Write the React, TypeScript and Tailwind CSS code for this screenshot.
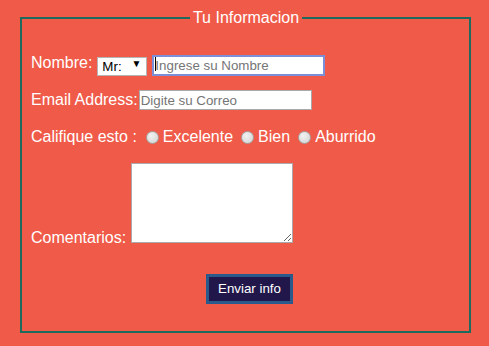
import { useState } from 'react';

const radios = ['Excelente', 'Bien', 'Aburrido'];

export default function App() {
  const [rating, setRating] = useState('');

  return (
    <div
      className="min-h-screen w-full bg-[#f05a48] pt-[9px] text-white"
      style={{ fontFamily: '"Liberation Sans", Arial, sans-serif' }}
    >
      <form onSubmit={(e) => e.preventDefault()}>
        <fieldset className="mx-[20px] h-[324px] w-[451px] border-2 border-[#1e6a5c] pl-[9px] pr-[8px]">
          <legend className="mx-auto px-[3px] text-[16px] leading-[18px]">Tu Informacion</legend>

          {/* Nombre */}
          <div className="mt-[26px] flex h-[21px] items-center">
            <span className="mt-[-1px] text-[16px] leading-[18px]">Nombre:</span>
            <div className="relative ml-[5px] h-[19px] w-[50px]">
              <select className="h-full w-full appearance-none border border-[#b5b5b5] bg-white pl-[4px] text-[13.33px] leading-[17px] text-black outline-none">
                <option>Mr:</option>
                <option>Mrs:</option>
              </select>
              {/* dropdown arrow */}
              <span className="pointer-events-none absolute right-[6px] top-[3px] text-[10px] leading-[13px] text-black">▼</span>
            </div>
            <div className="relative ml-[5px] h-[21px] w-[173px]">
              <input
                type="text"
                placeholder="Ingrese su Nombre"
                className="h-full w-full border-2 border-[#7d8ed8] bg-white px-[1px] text-[13.33px] text-black outline-none placeholder:text-[#757575]"
              />
              {/* caret */}
              <span className="pointer-events-none absolute left-[3px] top-[4px] h-[14px] w-px bg-black" />
            </div>
          </div>

          {/* Email */}
          <div className="mt-[16px] flex h-[20px] items-center">
            <span className="mt-[-1px] text-[16px] leading-[18px]">Email Address:</span>
            <input
              type="email"
              placeholder="Digite su Correo"
              className="ml-[1px] h-[20px] w-[173px] border border-[#a9a9a9] bg-white px-[1px] text-[13.33px] text-black outline-none placeholder:text-[#757575]"
            />
          </div>

          {/* Califique */}
          <div className="mt-[18px] flex h-[18px] items-center text-[16px] leading-[18px]">
            <span>Califique esto :</span>
            {radios.map((r, i) => (
              <label key={r} className={`flex items-center ${i === 0 ? 'ml-[9px]' : 'ml-[8px]'}`}>
                <input
                  type="radio"
                  name="rating"
                  checked={rating === r}
                  onChange={() => setRating(r)}
                  className="mr-[4px] h-[13px] w-[13px] appearance-none rounded-full border border-[#a3a3a3] bg-[radial-gradient(circle_at_40%_35%,#f2f2f2,#d0d0d0)] checked:bg-[radial-gradient(circle,#333_30%,#e0e0e0_35%)]"
                />
                <span>{r}</span>
              </label>
            ))}
          </div>

          {/* Comentarios */}
          <div className="mt-[17px] flex items-end">
            <span className="mb-[-3px] text-[16px] leading-none">Comentarios:</span>
            <textarea className="ml-[5px] h-[80px] w-[162px] border border-[#a9a9a9] bg-white text-[13.33px] text-black outline-none" />
          </div>

          {/* Enviar */}
          <div className="mt-[31px] flex justify-center pl-[7px]">
            <button
              type="submit"
              className="h-[30px] border-[3px] border-[#2a5a8c] bg-[#21174a] px-[9px] text-[13.33px] leading-[18px] text-white"
            >
              Enviar info
            </button>
          </div>
        </fieldset>
      </form>
    </div>
  );
}
